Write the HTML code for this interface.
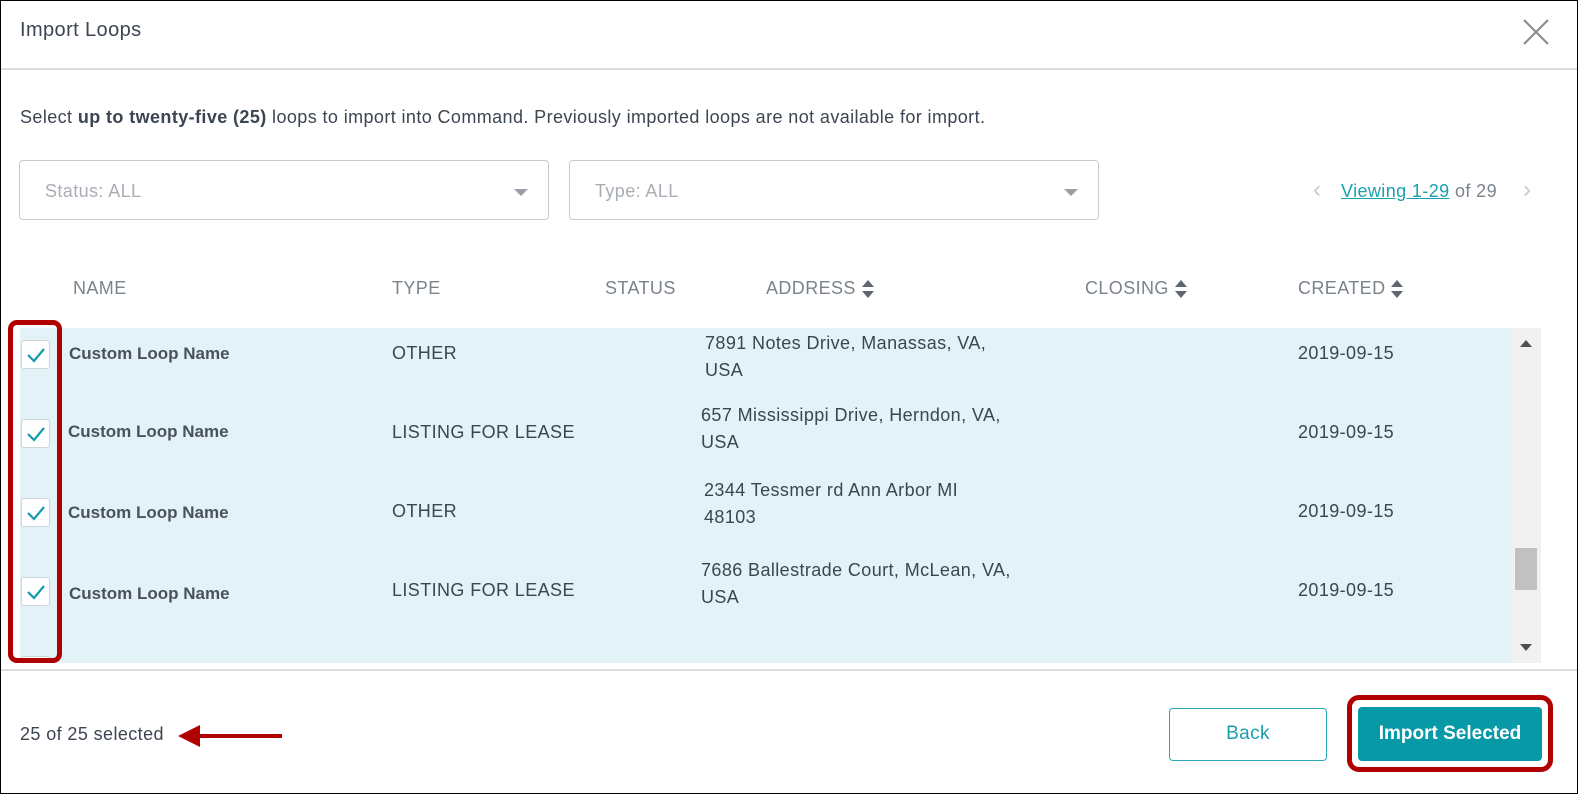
<!DOCTYPE html>
<html><head><style>
body{margin:0;width:1578px;height:794px;overflow:hidden;background:#fff;font-family:"Liberation Sans",sans-serif;color:#3c4552;letter-spacing:0.4px}
.frame{position:absolute;left:0;top:0;width:1576px;height:792px;border:1px solid #000;}
.a{position:absolute;white-space:nowrap}
.sel{position:absolute;height:60px;border:1px solid #c8ccd0;border-radius:4px;color:#a9aeb4;font-size:18px;line-height:60px;padding-left:25px;box-sizing:border-box}
.caret{position:absolute;right:20px;top:28px;border-left:7px solid transparent;border-right:7px solid transparent;border-top:7px solid #9a9fa5}
.h{position:absolute;top:278px;font-size:18px;color:#7b838c}
.sort{display:inline-block;vertical-align:middle;margin-left:6px;width:12px;height:18px;position:relative}
.sort:before{content:"";position:absolute;top:0;left:0;border-left:6px solid transparent;border-right:6px solid transparent;border-bottom:7px solid #5f6670}
.sort:after{content:"";position:absolute;bottom:0;left:0;border-left:6px solid transparent;border-right:6px solid transparent;border-top:7px solid #5f6670}
.cb{position:absolute;left:21px;width:29px;height:29px;background:#fff;border:1px solid #cfd5d9;border-radius:3px;box-sizing:border-box}
.cb svg{position:absolute;left:4px;top:5px}
.t{font-size:18px;color:#3c4552}
.n{font-size:17px;font-weight:bold;color:#4a525c;letter-spacing:0}
</style></head><body>
<div class="frame"></div>
<div class="a" style="left:20px;top:19px;font-size:20px;color:#3c4552">Import Loops</div>
<svg class="a" style="left:1522px;top:18px" width="28" height="28"><path d="M2 2L26 26M26 2L2 26" stroke="#8a8f95" stroke-width="2.2"/></svg>
<div class="a" style="left:1px;top:68px;width:1576px;height:2px;background:#d9dde0"></div>
<div class="a" style="left:20px;top:107px;font-size:18px">Select <b>up to twenty-five (25)</b> loops to import into Command. Previously imported loops are not available for import.</div>
<div class="sel" style="left:19px;top:160px;width:530px">Status: ALL<div class="caret"></div></div>
<div class="sel" style="left:569px;top:160px;width:530px">Type: ALL<div class="caret"></div></div>
<div class="a" style="left:1313px;top:176px;font-size:24px;color:#c5c9cd">&#x2039;</div>
<div class="a" style="left:1341px;top:181px;font-size:18px;color:#7b838c"><span style="color:#1aa0b0;text-decoration:underline">Viewing 1-29</span> of 29</div>
<div class="a" style="left:1523px;top:176px;font-size:24px;color:#c5c9cd">&#x203A;</div>
<div class="h" style="left:73px">NAME</div>
<div class="h" style="left:392px">TYPE</div>
<div class="h" style="left:605px">STATUS</div>
<div class="h" style="left:766px">ADDRESS<span class="sort"></span></div>
<div class="h" style="left:1085px">CLOSING<span class="sort"></span></div>
<div class="h" style="left:1298px">CREATED<span class="sort"></span></div>
<div class="a" style="left:20px;top:328px;width:1492px;height:335px;background:#e3f2f6"></div>
<div class="a" style="left:1512px;top:328px;width:29px;height:335px;background:#f1f1f1"></div>
<div class="a" style="left:1515px;top:548px;width:22px;height:42px;background:#c1c1c1"></div>
<div class="a" style="left:1520px;top:340px;border-left:6px solid transparent;border-right:6px solid transparent;border-bottom:7px solid #505050"></div>
<div class="a" style="left:1520px;top:644px;border-left:6px solid transparent;border-right:6px solid transparent;border-top:7px solid #505050"></div>
<div class="a" style="left:1px;top:669px;width:1576px;height:2px;background:#d9dde0"></div>

<div class="cb" style="top:340px"><svg width="20" height="18"><path d="M2 9L8 15L18 3" stroke="#149aa8" stroke-width="2.2" fill="none"/></svg></div>
<div class="cb" style="top:419px"><svg width="20" height="18"><path d="M2 9L8 15L18 3" stroke="#149aa8" stroke-width="2.2" fill="none"/></svg></div>
<div class="cb" style="top:498px"><svg width="20" height="18"><path d="M2 9L8 15L18 3" stroke="#149aa8" stroke-width="2.2" fill="none"/></svg></div>
<div class="cb" style="top:577px"><svg width="20" height="18"><path d="M2 9L8 15L18 3" stroke="#149aa8" stroke-width="2.2" fill="none"/></svg></div>
<div class="cb" style="top:656px;height:8px;border-bottom:none"></div>

<div class="a n" style="left:69px;top:344px">Custom Loop Name</div>
<div class="a t" style="left:392px;top:343px">OTHER</div>
<div class="a t" style="left:705px;top:330px;line-height:27px">7891 Notes Drive, Manassas, VA,<br>USA</div>
<div class="a t" style="left:1298px;top:343px">2019-09-15</div>

<div class="a n" style="left:68px;top:422px">Custom Loop Name</div>
<div class="a t" style="left:392px;top:422px">LISTING FOR LEASE</div>
<div class="a t" style="left:701px;top:402px;line-height:27px">657 Mississippi Drive, Herndon, VA,<br>USA</div>
<div class="a t" style="left:1298px;top:422px">2019-09-15</div>

<div class="a n" style="left:68px;top:503px">Custom Loop Name</div>
<div class="a t" style="left:392px;top:501px">OTHER</div>
<div class="a t" style="left:704px;top:477px;line-height:27px">2344 Tessmer rd Ann Arbor MI<br>48103</div>
<div class="a t" style="left:1298px;top:501px">2019-09-15</div>

<div class="a n" style="left:69px;top:584px">Custom Loop Name</div>
<div class="a t" style="left:392px;top:580px">LISTING FOR LEASE</div>
<div class="a t" style="left:701px;top:557px;line-height:27px">7686 Ballestrade Court, McLean, VA,<br>USA</div>
<div class="a t" style="left:1298px;top:580px">2019-09-15</div>

<div class="a" style="left:8px;top:320px;width:44px;height:333px;border:5px solid #b00000;border-radius:9px"></div>

<div class="a" style="left:20px;top:724px;font-size:18px">25 of 25 selected</div>
<div class="a" style="left:194px;top:734px;width:88px;height:4px;background:#b00000"></div>
<div class="a" style="left:178px;top:725px;border-top:11px solid transparent;border-bottom:11px solid transparent;border-right:22px solid #b00000"></div>

<div class="a" style="left:1169px;top:708px;width:158px;height:53px;border:1.5px solid #2aa6b4;border-radius:4px;box-sizing:border-box;color:#1a9fae;font-size:19px;text-align:center;line-height:50px">Back</div>
<div class="a" style="left:1347px;top:695px;width:206px;height:77px;border:5px solid #b00000;border-radius:12px;box-sizing:border-box"></div>
<div class="a" style="left:1358px;top:707px;width:184px;height:54px;background:#0899a7;border-radius:4px;color:#fff;font-size:19px;font-weight:bold;text-align:center;line-height:54px;letter-spacing:0">Import Selected</div>
</body></html>
